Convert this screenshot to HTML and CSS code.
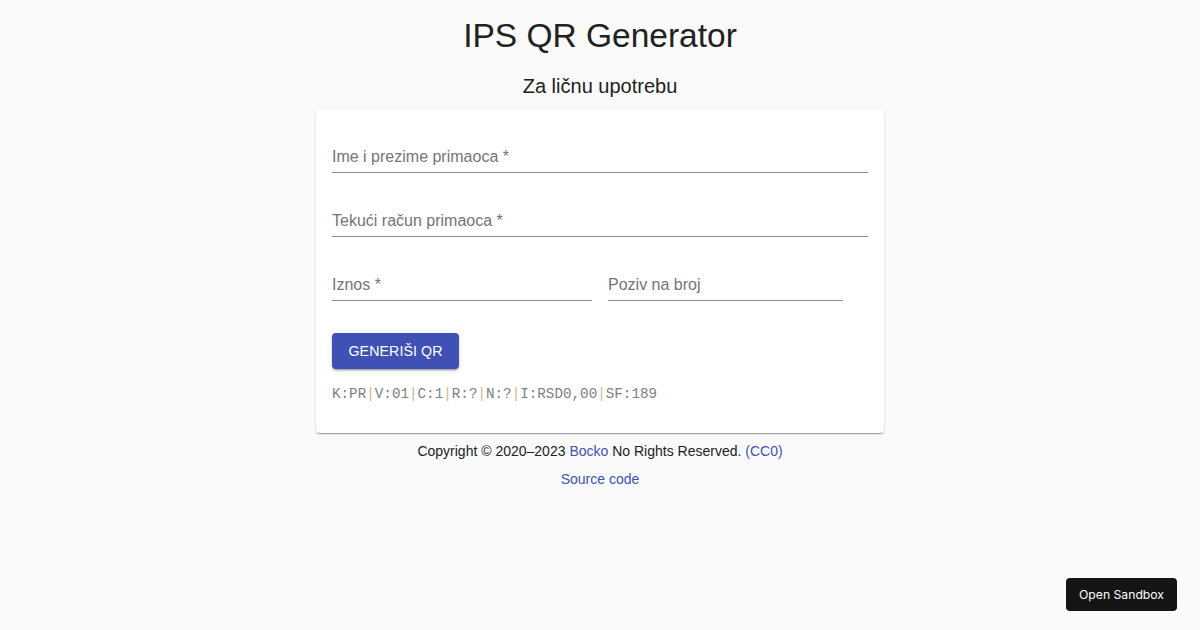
FILE: index.html
```html
<!DOCTYPE html>
<html>
<head>
<meta charset="utf-8">
<link rel="stylesheet" href="styles.css">
</head>
<body>
<main class="page">
  <h1 class="title">IPS QR Generator</h1>
  <h2 class="subtitle">Za ličnu upotrebu</h2>
  <section class="card">
    <div class="field full"><span class="label">Ime i prezime primaoca *</span></div>
    <div class="field full"><span class="label">Tekući račun primaoca *</span></div>
    <div class="row">
      <div class="field amount"><span class="label">Iznos *</span></div>
      <div class="field ref"><span class="label">Poziv na broj</span></div>
    </div>
    <button class="btn">GENERIŠI QR</button>
    <pre class="code">K:PR<span class="sep">|</span>V:01<span class="sep">|</span>C:1<span class="sep">|</span>R:?<span class="sep">|</span>N:?<span class="sep">|</span>I:RSD0,00<span class="sep">|</span>SF:189</pre>
  </section>
  <footer class="footer">
    <p class="copy">Copyright © 2020–2023 <a class="link">Bocko</a> No Rights Reserved. <a class="link">(CC0)</a></p>
    <p class="source"><a class="link">Source code</a></p>
  </footer>
</main>
<div class="sandbox">Open Sandbox</div>
</body>
</html>
```

FILE: styles.css
```css
* { box-sizing: border-box; }
html, body { margin: 0; padding: 0; }
body {
  background: #fafafa;
  font-family: "Liberation Sans", Arial, sans-serif;
  color: #212121;
  width: 1200px;
  height: 630px;
  overflow: hidden;
}
.page {
  display: flex;
  flex-direction: column;
  align-items: center;
}
.title {
  margin: 16px 0 0;
  font-size: 33.5px;
  font-weight: 400;
  line-height: 40px;
}
.subtitle {
  margin: 18px 0 0;
  font-size: 20px;
  font-weight: 400;
  line-height: 24px;
}
.card {
  margin-top: 11px;
  width: 568px;
  background: #fff;
  border-radius: 4px;
  box-shadow: 0 2px 1px -1px rgba(0,0,0,0.2), 0 1px 1px 0 rgba(0,0,0,0.14), 0 1px 3px 0 rgba(0,0,0,0.12);
  padding: 0 16px 0;
  display: flex;
  flex-direction: column;
}
.field {
  height: 48px;
  margin-top: 16px;
  border-bottom: 1px solid #8c8c8c;
  display: flex;
  align-items: flex-end;
  padding-bottom: 6px;
}
.field.full { width: 536px; }
.label {
  font-size: 16px;
  color: #757575;
  line-height: 19px;
}
.row {
  display: flex;
  gap: 16px;
}
.amount { width: 260px; }
.ref { width: 235px; }
.btn {
  align-self: flex-start;
  margin-top: 32px;
  height: 36px;
  width: 127px;
  background: #3f51b5;
  color: #fff;
  border: none;
  border-radius: 4px;
  font-family: "Liberation Sans", Arial, sans-serif;
  font-size: 14.2px;
  letter-spacing: 0.1px;
  box-shadow: 0 3px 1px -2px rgba(0,0,0,0.2), 0 2px 2px 0 rgba(0,0,0,0.14), 0 1px 5px 0 rgba(0,0,0,0.12);
  padding: 0;
}
.code {
  margin: 16px 0 0;
  font-family: "Liberation Mono", "Courier New", monospace;
  font-size: 14.25px;
  line-height: 18px;
  color: #808080;
  padding-bottom: 30px;
}
.sep { color: #cfb39a; }
.footer {
  display: flex;
  flex-direction: column;
  align-items: center;
  font-size: 14px;
}
.copy { margin: 10px 0 0; line-height: 16px; }
.source { margin: 12px 0 0; line-height: 16px; }
.link { color: #3f51b5; text-decoration: none; }
.sandbox {
  position: fixed;
  right: 23px;
  bottom: 19px;
  width: 111px;
  height: 33px;
  background: #151515;
  color: #fff;
  border-radius: 4px;
  font-family: "Inter", "Liberation Sans", sans-serif;
  font-size: 12.2px;
  display: flex;
  align-items: center;
  justify-content: center;
}
```
